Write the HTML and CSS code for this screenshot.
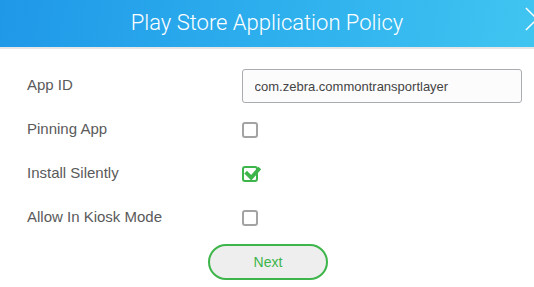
FILE: index.html
```html
<!DOCTYPE html>
<html lang="en">
<head>
  <meta charset="UTF-8">
  <title>Play Store Application Policy</title>
  <link rel="stylesheet" href="styles.css">
</head>
<body>
  <div class="dialog">
    <div class="dialog-header">
      <span class="dialog-title">Play Store Application Policy</span>
      <span class="close-btn">
        <svg viewBox="0 0 26 26" fill="none">
          <path d="M1 1L25 25M25 1L1 25" stroke="#fff" stroke-width="1.6"/>
        </svg>
      </span>
    </div>

    <div class="form">
      <div class="row">
        <label class="label">App ID</label>
        <input class="text-input" type="text" value="com.zebra.commontransportlayer">
      </div>
      <div class="row">
        <label class="label">Pinning App</label>
        <span class="check"></span>
      </div>
      <div class="row">
        <label class="label">Install Silently</label>
        <span class="check checked">
          <svg viewBox="0 0 20 20" fill="none">
            <path d="M4 9.5l4.2 4.2L15.5 5.5" stroke="#3db54a" stroke-width="3.8" stroke-linecap="square"/>
          </svg>
        </span>
      </div>
      <div class="row">
        <label class="label">Allow In Kiosk Mode</label>
        <span class="check"></span>
      </div>
      <div class="actions">
        <button class="next-btn">Next</button>
      </div>
    </div>
  </div>
</body>
</html>
```

FILE: styles.css
```css
body {
  margin: 0;
  padding: 0;
  background: #fff;
  font-family: 'Liberation Sans', Arial, sans-serif;
  overflow: hidden;
}
.dialog {
  width: 534px;
  height: 287px;
  overflow: hidden;
}
.dialog-header {
  position: relative;
  height: 47px;
  display: flex;
  align-items: center;
  justify-content: center;
  background: linear-gradient(100deg, #1f98e8 0%, #30b3ee 60%, #40c5f1 100%);
  border-bottom: 2px solid #e4e6e8;
}
.dialog-title {
  font-family: Roboto, 'Liberation Sans', sans-serif;
  font-weight: 300;
  font-size: 22px;
  color: #fff;
  margin-top: -3px;
}
.close-btn {
  position: absolute;
  left: 525px;
  top: 7px;
  width: 24px;
  height: 24px;
}
.close-btn svg {
  width: 24px;
  height: 24px;
  display: block;
}
.form {
  padding: 15px 12px 0 27px;
}
.row {
  display: flex;
  align-items: center;
  height: 44px;
}
.label {
  width: 215px;
  font-size: 15px;
  color: #5a5a5a;
  margin-top: -3px;
}
.text-input {
  box-sizing: border-box;
  width: 281px;
  height: 34px;
  border: 1px solid #a9acb0;
  border-radius: 3px;
  padding: 0 12px;
  font-family: 'Liberation Sans', Arial, sans-serif;
  font-size: 13px;
  color: #444;
  background: #fcfcfc;
  outline: none;
}
.check {
  position: relative;
  box-sizing: border-box;
  width: 16px;
  height: 16px;
  border: 2px solid #a3a3a3;
  border-radius: 3px;
}
.check.checked {
  border-color: #3db54a;
}
.check svg {
  position: absolute;
  left: -1px;
  top: -4px;
  width: 20px;
  height: 20px;
}
.actions {
  display: flex;
  justify-content: center;
  padding-right: 13px;
  margin-top: 4px;
}
.next-btn {
  width: 120px;
  height: 36px;
  border: 2px solid #3db54a;
  border-radius: 18px;
  background: #eeeeee;
  color: #3db54a;
  font-family: 'Liberation Sans', Arial, sans-serif;
  font-size: 14px;
  cursor: pointer;
}
```
